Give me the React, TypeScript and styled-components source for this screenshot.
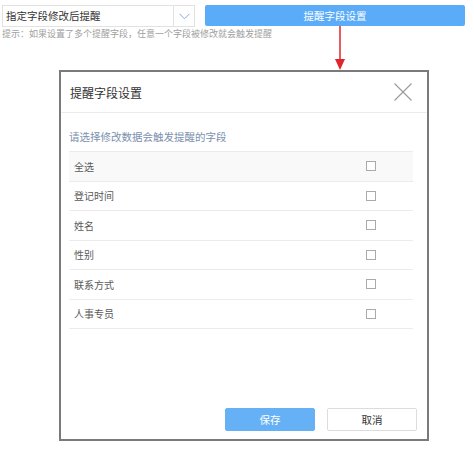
import React from 'react'
import styled, { createGlobalStyle } from 'styled-components'

const GlobalStyle = createGlobalStyle`
  body {
    margin: 0;
    background: #ffffff;
    font-family: "Noto Sans CJK SC", "Noto Sans", sans-serif;
  }
`

const Page = styled.div`
  position: relative;
  width: 474px;
  height: 450px;
  padding: 5px 0 0 2px;
  box-sizing: border-box;
`

const TopRow = styled.div`
  display: flex;
  align-items: flex-start;
  gap: 10px;
`

const Select = styled.div`
  display: flex;
  width: 193px;
  height: 22px;
  border: 1px solid #e2e2e2;
  box-sizing: border-box;
  background: #fff;
`

const SelectText = styled.div`
  flex: 1;
  padding-left: 3px;
  font-size: 10.5px;
  line-height: 20px;
  color: #333;
`

const SelectArrow = styled.div`
  width: 20px;
  border-left: 1px solid #e2e2e2;
  display: flex;
  align-items: center;
  justify-content: center;
`

const SetButton = styled.button`
  width: 260px;
  height: 21px;
  border: none;
  border-radius: 2px;
  background: #5aabf8;
  color: #fff;
  font-family: inherit;
  font-size: 10.5px;
  padding: 0;
  line-height: 21px;
`

const Hint = styled.div`
  margin-top: 1px;
  font-size: 9px;
  line-height: 12px;
  color: #a0a0a0;
`

const Pointer = styled.svg`
  position: absolute;
  left: 334px;
  top: 26px;
`

const Modal = styled.div`
  margin: 30px 0 0 57px;
  width: 370px;
  height: 371px;
  border: 2px solid #7a7a7a;
  box-sizing: border-box;
  display: flex;
  flex-direction: column;
  background: #fff;
`

const ModalHeader = styled.div`
  height: 40px;
  display: flex;
  align-items: center;
  justify-content: space-between;
  padding: 0 15px 0 9px;
  border-bottom: 1px solid #ececec;
`

const ModalTitle = styled.div`
  font-size: 12px;
  color: #333;
`

const ModalBody = styled.div`
  flex: 1;
  padding: 16px 14px 0 8px;
`

const Subtitle = styled.div`
  font-size: 10.5px;
  line-height: 16px;
  color: #7b8fae;
  margin-bottom: 6px;
`

const FieldList = styled.div`
  display: flex;
  flex-direction: column;
  border-bottom: 1px solid #ececec;
`

const FieldRow = styled.div<{ $head?: boolean }>`
  height: 29.5px;
  box-sizing: border-box;
  border-top: 1px solid #ececec;
  background: ${p => (p.$head ? '#f9f9f9' : '#fff')};
  display: flex;
  align-items: center;
  justify-content: space-between;
  padding: 0 37px 0 5px;
  font-size: 10px;
  color: #5a5a5a;
`

const Check = styled.span`
  width: 10px;
  height: 10px;
  border: 1px solid #aaa;
  box-sizing: border-box;
  background: #fff;
`

const ModalFooter = styled.div`
  display: flex;
  justify-content: flex-end;
  gap: 12px;
  padding: 0 10px 8px 0;
`

const FooterButton = styled.button<{ $primary?: boolean }>`
  width: 90px;
  height: 23px;
  padding: 0;
  border: 1px solid ${p => (p.$primary ? '#66b1f6' : '#dcdcdc')};
  border-radius: 2px;
  background: ${p => (p.$primary ? '#66b1f6' : '#fff')};
  color: ${p => (p.$primary ? '#fff' : '#333')};
  font-family: inherit;
  font-size: 10.5px;
`

const fields = ['登记时间', '姓名', '性别', '联系方式', '人事专员']

export default function App() {
  return (
    <Page>
      <GlobalStyle />
      <TopRow>
        <Select>
          <SelectText>指定字段修改后提醒</SelectText>
          <SelectArrow>
            <svg width="11" height="7" viewBox="0 0 11 7">
              <polyline points="0.5,0.8 5.5,5.8 10.5,0.8" fill="none" stroke="#8fa9cf" strokeWidth="1" />
            </svg>
          </SelectArrow>
        </Select>
        <SetButton>提醒字段设置</SetButton>
      </TopRow>
      <Hint>提示：如果设置了多个提醒字段，任意一个字段被修改就会触发提醒</Hint>

      <Pointer width="12" height="46" viewBox="0 0 12 46">
        <line x1="6" y1="0" x2="6" y2="35" stroke="#e0262c" strokeWidth="1.5" />
        <polygon points="1,33 11,33 6,44" fill="#e0262c" />
      </Pointer>

      <Modal>
        <ModalHeader>
          <ModalTitle>提醒字段设置</ModalTitle>
          <svg width="18" height="18" viewBox="0 0 18 18">
            <line x1="0.5" y1="0.5" x2="17.5" y2="17.5" stroke="#9a9a9a" strokeWidth="1.1" />
            <line x1="17.5" y1="0.5" x2="0.5" y2="17.5" stroke="#9a9a9a" strokeWidth="1.1" />
          </svg>
        </ModalHeader>
        <ModalBody>
          <Subtitle>请选择修改数据会触发提醒的字段</Subtitle>
          <FieldList>
            <FieldRow $head>
              <span>全选</span>
              <Check />
            </FieldRow>
            {fields.map(f => (
              <FieldRow key={f}>
                <span>{f}</span>
                <Check />
              </FieldRow>
            ))}
          </FieldList>
        </ModalBody>
        <ModalFooter>
          <FooterButton $primary>保存</FooterButton>
          <FooterButton>取消</FooterButton>
        </ModalFooter>
      </Modal>
    </Page>
  )
}
